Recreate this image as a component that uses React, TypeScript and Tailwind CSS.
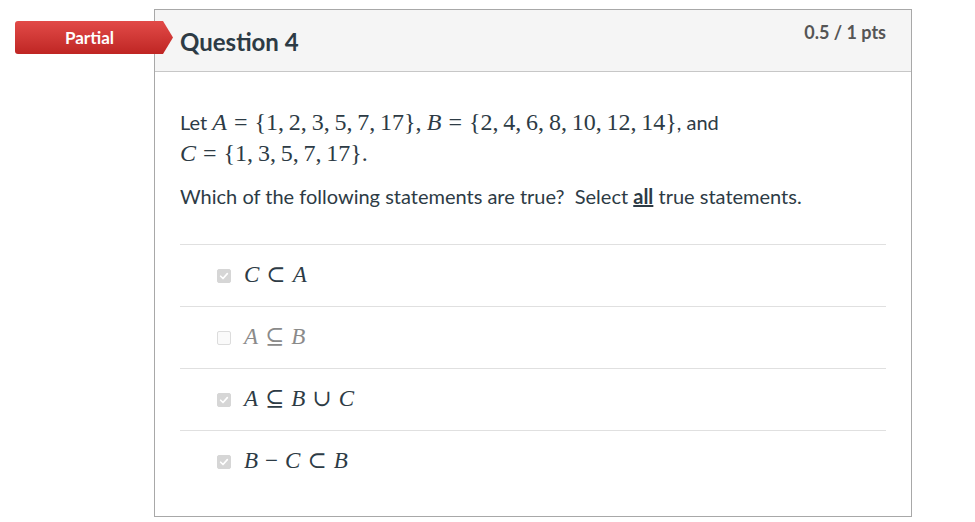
import type { ReactNode } from 'react'

const mathFont = { fontFamily: '"Liberation Serif", "DejaVu Serif", serif' }

function V({ children }: { children: ReactNode }) {
  return <span className="italic">{children}</span>
}

function M({ children, size = 'text-[24px]' }: { children: ReactNode; size?: string }) {
  return (
    <span style={mathFont} className={size + ' whitespace-nowrap'}>
      {children}
    </span>
  )
}

function Op({ children }: { children: ReactNode }) {
  return <span className="mx-[7px]">{children}</span>
}

function Check({ checked }: { checked: boolean }) {
  return (
    <span
      className={
        'flex h-[14px] w-[14px] items-center justify-center rounded-[2px] border ' +
        (checked ? 'border-[#d6d6d6] bg-[#d6d6d6]' : 'border-[#dcdcdc] bg-[#fafafa]')
      }
    >
      {checked && (
        <svg viewBox="0 0 12 12" className="h-[10px] w-[10px]">
          <path d="M2 6.3 L4.8 9 L10 3.2" fill="none" stroke="#fff" strokeWidth="2" strokeLinecap="round" strokeLinejoin="round" />
        </svg>
      )}
    </span>
  )
}

const options: { checked: boolean; dim?: boolean; body: ReactNode }[] = [
  {
    checked: true,
    body: (
      <>
        <V>C</V>
        <Op>⊂</Op>
        <V>A</V>
      </>
    ),
  },
  {
    checked: false,
    dim: true,
    body: (
      <>
        <V>A</V>
        <Op>⊆</Op>
        <V>B</V>
      </>
    ),
  },
  {
    checked: true,
    body: (
      <>
        <V>A</V>
        <Op>⊆</Op>
        <V>B</V>
        <Op>∪</Op>
        <V>C</V>
      </>
    ),
  },
  {
    checked: true,
    body: (
      <>
        <V>B</V>
        <Op>−</Op>
        <V>C</V>
        <Op>⊂</Op>
        <V>B</V>
      </>
    ),
  },
]

export default function App() {
  return (
    <div className="h-[522px] w-[975px] bg-white pt-[9px] text-[#2d3b45]" style={{ fontFamily: 'Lato, "Liberation Sans", sans-serif' }}>
      <div className="relative ml-[154px] h-[508px] w-[758px] border border-[#a8a8a8]">
        {/* Partial badge */}
        <div className="absolute left-[-140px] top-[11px] flex h-[33px] w-[158px]">
          <div className="flex flex-1 items-center justify-center rounded-l-[3px] bg-gradient-to-b from-[#e24a48] to-[#bf2523] pl-[2px] text-[17px] font-bold text-white">
            Partial
          </div>
          <svg viewBox="0 0 11 33" className="h-[33px] w-[11px]" preserveAspectRatio="none">
            <defs>
              <linearGradient id="bg" x1="0" y1="0" x2="0" y2="1">
                <stop offset="0" stopColor="#e24a48" />
                <stop offset="1" stopColor="#bf2523" />
              </linearGradient>
            </defs>
            <path d="M0 0 L1 0 L11 16.5 L1 33 L0 33 Z" fill="url(#bg)" />
          </svg>
        </div>

        <div className="flex h-[62px] items-start justify-between border-b border-[#c7c7c7] bg-[#f5f5f5] pl-[25px] pr-[25px]">
          <h2 className="mt-[16px] text-[24px] font-bold leading-[32px] text-[#2d3b45]">Question 4</h2>
          <span className="mt-[10px] text-[18px] font-bold leading-[24px] text-[#555]">0.5 / 1 pts</span>
        </div>

        <div className="px-[25px] pt-[35px]">
          <div className="text-[20px] leading-[31px] text-[#2d3b45]">
            Let{' '}
            <M>
              <V>A</V>
              <Op>=</Op>
              {'{1,\u20092,\u20093,\u20095,\u20097,\u200917}'}
            </M>
            <span style={mathFont} className="text-[24px]">,</span>{' '}
            <M>
              <V>B</V>
              <Op>=</Op>
              {'{2,\u20094,\u20096,\u20098,\u200910,\u200912,\u200914}'}
            </M>
            , and
            <br />
            <M>
              <V>C</V>
              <Op>=</Op>
              {'{1,\u20093,\u20095,\u20097,\u200917}'}
            </M>
            <span style={mathFont} className="text-[24px]">.</span>
          </div>
          <p className="mt-[14px] text-[20px] leading-[26px] text-[#2d3b45]">
            Which of the following statements are true?&nbsp; Select <span className="font-bold underline">all</span> true statements.
          </p>

          <div className="mt-[35px]">
            {options.map((o, i) => (
              <div key={i} className="flex h-[62px] items-center gap-[13px] border-t border-[#e0e0e0] pl-[37px]">
                <Check checked={o.checked} />
                <span className={o.dim ? 'text-[#8a8a8a]' : 'text-[#2d3b45]'}>
                  <M size="text-[23px]">{o.body}</M>
                </span>
              </div>
            ))}
          </div>
        </div>
      </div>
    </div>
  )
}
